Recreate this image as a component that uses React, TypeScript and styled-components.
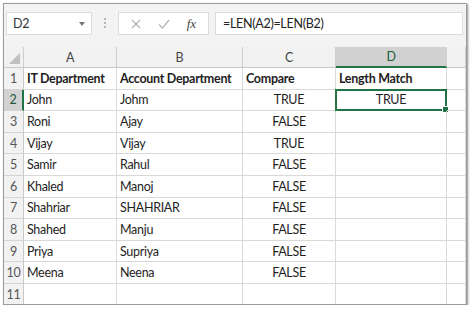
import styled, { createGlobalStyle } from 'styled-components';

const GlobalStyle = createGlobalStyle`
    body {
        margin: 0;
        background: #ffffff;
    }
`;

const green = '#217346';
const grid = '#d9d9d9';

const rows: [string, string, string][] = [
    ['John', 'Johm', 'TRUE'],
    ['Roni', 'Ajay', 'FALSE'],
    ['Vijay', 'Vijay', 'TRUE'],
    ['Samir', 'Rahul', 'FALSE'],
    ['Khaled', 'Manoj', 'FALSE'],
    ['Shahriar', 'SHAHRIAR', 'FALSE'],
    ['Shahed', 'Manju', 'FALSE'],
    ['Priya', 'Supriya', 'FALSE'],
    ['Meena', 'Neena', 'FALSE'],
];

const Frame = styled.div`
    margin: 3px 0 0 3px;
    width: 462px;
    height: 300px;
    border: 1px solid #9c9c9c;
    box-shadow: 1px 1px 2px rgba(0, 0, 0, 0.45);
    background: #f3f3f3;
    overflow: hidden;
    font-family: Lato, "Open Sans", sans-serif;
    font-size: 12.5px;
    letter-spacing: -0.3px;
    color: #1e1e1e;
`;

const FormulaBar = styled.div`
    display: flex;
    align-items: center;
    height: 43px;
    padding: 0 2px 4px;
    box-sizing: border-box;
`;

const Box = styled.div`
    height: 23px;
    background: #ffffff;
    border: 1px solid #dcdcdc;
    box-sizing: border-box;
    display: flex;
    align-items: center;
`;

const NameBox = styled(Box)`
    width: 86px;
    padding: 0 6px;
    justify-content: space-between;
    color: #333;
`;

const Caret = styled.span`
    width: 0;
    height: 0;
    border-left: 3px solid transparent;
    border-right: 3px solid transparent;
    border-top: 4px solid #777;
`;

const Dots = styled.div`
    width: 2px;
    height: 11px;
    margin: 0 12px;
    background: repeating-linear-gradient(#b5b5b5 0 2px, transparent 2px 4px);
`;

const FxBox = styled(Box)`
    width: 91px;
    justify-content: space-around;
    padding: 0 4px;
    margin-right: 6px;
`;

const Fx = styled.span`
    font-family: "Liberation Serif", serif;
    font-style: italic;
    font-size: 13px;
    color: #444;
`;

const FormulaInput = styled(Box)`
    width: 248px;
    padding-left: 7px;
    color: #222;
`;

const Sheet = styled.div`
    display: grid;
    grid-template-columns: 20px 93px 126px 93px 111px 1fr;
    grid-template-rows: 21px;
    grid-auto-rows: 21.6px;
    background: #ffffff;
`;

type Align = 'left' | 'center';

const Cell = styled.div<{ $align?: Align; $bold?: boolean }>`
    display: flex;
    align-items: center;
    justify-content: ${p => (p.$align === 'center' ? 'center' : 'flex-start')};
    padding: 0 3px;
    border-right: 1px solid ${grid};
    border-bottom: 1px solid ${grid};
    box-sizing: border-box;
    font-weight: ${p => (p.$bold ? 700 : 400)};
    white-space: nowrap;
    position: relative;
`;

const ColHead = styled(Cell)<{ $active?: boolean }>`
    justify-content: center;
    background: ${p => (p.$active ? '#d2d2d2' : '#f2f2f2')};
    color: ${p => (p.$active ? '#215a3a' : '#444')};
    border-right-color: #cfcfcf;
    border-bottom: ${p => (p.$active ? `2px solid ${green}` : '1px solid #c8c8c8')};
`;

const Corner = styled(ColHead)`
    &::after {
        content: '';
        position: absolute;
        right: 3px;
        bottom: 3px;
        border-left: 11px solid transparent;
        border-bottom: 11px solid #c0c0c0;
    }
`;

const RowHead = styled(Cell)<{ $active?: boolean }>`
    justify-content: center;
    padding: 0;
    background: ${p => (p.$active ? '#d2d2d2' : '#f2f2f2')};
    color: ${p => (p.$active ? '#215a3a' : '#555')};
    border-right: ${p => (p.$active ? `2px solid ${green}` : '1px solid #c8c8c8')};
    border-bottom-color: #d4d4d4;
`;

const Selected = styled(Cell)`
    border: 2px solid ${green};
    margin: -1px 0 0 -1px;
    &::after {
        content: '';
        position: absolute;
        right: -4px;
        bottom: -4px;
        width: 5px;
        height: 5px;
        background: ${green};
        border: 1px solid #ffffff;
    }
`;

const CrossIcon = () => (
    <svg width="10" height="10" viewBox="0 0 10 10">
        <path d="M1 1 L9 9 M9 1 L1 9" stroke="#b4b4b4" strokeWidth="1.2" fill="none" />
    </svg>
);

const CheckIcon = () => (
    <svg width="12" height="10" viewBox="0 0 12 10">
        <path d="M1 5.5 L4.5 9 L11 1" stroke="#b4b4b4" strokeWidth="1.2" fill="none" />
    </svg>
);

const App = () => {
    return (
        <>
            <GlobalStyle />
            <Frame>
                <FormulaBar>
                    <NameBox>
                        <span>D2</span>
                        <Caret />
                    </NameBox>
                    <Dots />
                    <FxBox>
                        <CrossIcon />
                        <CheckIcon />
                        <Fx>fx</Fx>
                    </FxBox>
                    <FormulaInput>=LEN(A2)=LEN(B2)</FormulaInput>
                </FormulaBar>

                <Sheet>
                    <Corner />
                    <ColHead>A</ColHead>
                    <ColHead>B</ColHead>
                    <ColHead>C</ColHead>
                    <ColHead $active>D</ColHead>
                    <ColHead />

                    <RowHead>1</RowHead>
                    <Cell $bold>IT Department</Cell>
                    <Cell $bold>Account Department</Cell>
                    <Cell $bold>Compare</Cell>
                    <Cell $bold>Length Match</Cell>
                    <Cell />

                    {rows.map(([it, acc, cmp], i) => (
                        <div key={i} style={{ display: 'contents' }}>
                            <RowHead $active={i === 0}>{i + 2}</RowHead>
                            <Cell>{it}</Cell>
                            <Cell>{acc}</Cell>
                            <Cell $align="center">{cmp}</Cell>
                            {i === 0 ? <Selected $align="center">TRUE</Selected> : <Cell />}
                            <Cell />
                        </div>
                    ))}

                    <RowHead>11</RowHead>
                    <Cell />
                    <Cell />
                    <Cell />
                    <Cell />
                    <Cell />
                </Sheet>
            </Frame>
        </>
    );
};

export default App;
